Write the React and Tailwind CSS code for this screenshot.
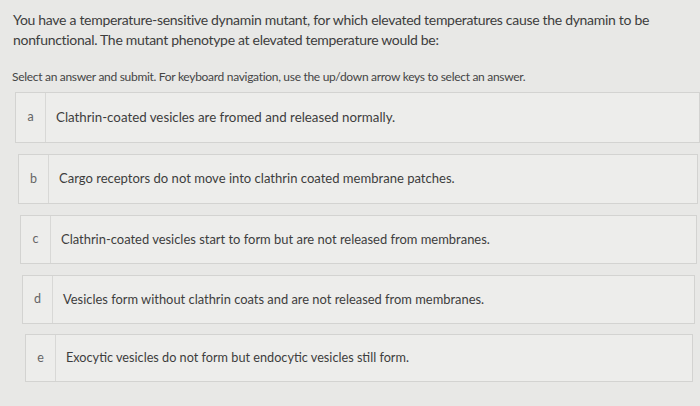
import React from 'react';

const options = [
  { letter: 'a', text: 'Clathrin-coated vesicles are fromed and released normally.', box: 'ml-[15px] mr-0 h-[51px] mt-[7px]', size: 'text-[13.3px]' },
  { letter: 'b', text: 'Cargo receptors do not move into clathrin coated membrane patches.', box: 'ml-[18px] mr-[2px] h-[50px] mt-[11px]', size: 'text-[13.05px]' },
  { letter: 'c', text: 'Clathrin-coated vesicles start to form but are not released from membranes.', box: 'ml-[20px] mr-[3px] h-[49px] mt-[11px]', size: 'text-[12.95px]' },
  { letter: 'd', text: 'Vesicles form without clathrin coats and are not released from membranes.', box: 'ml-[22px] mr-[5px] h-[49px] mt-[11px]', size: 'text-[12.9px]' },
  { letter: 'e', text: 'Exocytic vesicles do not form but endocytic vesicles still form.', box: 'ml-[25px] mr-[7px] h-[48px] mt-[10px]', size: 'text-[12.7px]' },
];

export default function App() {
  return (
    <div className="w-[700px] h-[406px] overflow-hidden bg-[#e8e8e6] font-['Lato',sans-serif] text-[#3d3d3d]">
      <div className="pl-[13px] pt-[10px] text-[14px] leading-[20px] tracking-[-0.3px]">
        <p>You have a temperature-sensitive dynamin mutant, for which elevated temperatures cause the dynamin to be</p>
        <p>nonfunctional. The mutant phenotype at elevated temperature would be:</p>
      </div>
      <p className="pl-[12px] mt-[19px] text-[12px] leading-[16px] tracking-[-0.3px] text-[#454545]">
        Select an answer and submit. For keyboard navigation, use the up/down arrow keys to select an answer.
      </p>
      <div className="flex flex-col">
        {options.map((o) => (
          <div key={o.letter} className={`${o.box} flex border border-[#d3d3d1] bg-[#ededeb]`}>
            <div className="w-[30px] flex items-center justify-center border-r border-[#d8d8d6] text-[12.5px] text-[#666]">
              {o.letter}
            </div>
            <div className={`flex items-center pl-[10px] ${o.size} text-[#3d3d3d]`}>{o.text}</div>
          </div>
        ))}
      </div>
    </div>
  );
}
